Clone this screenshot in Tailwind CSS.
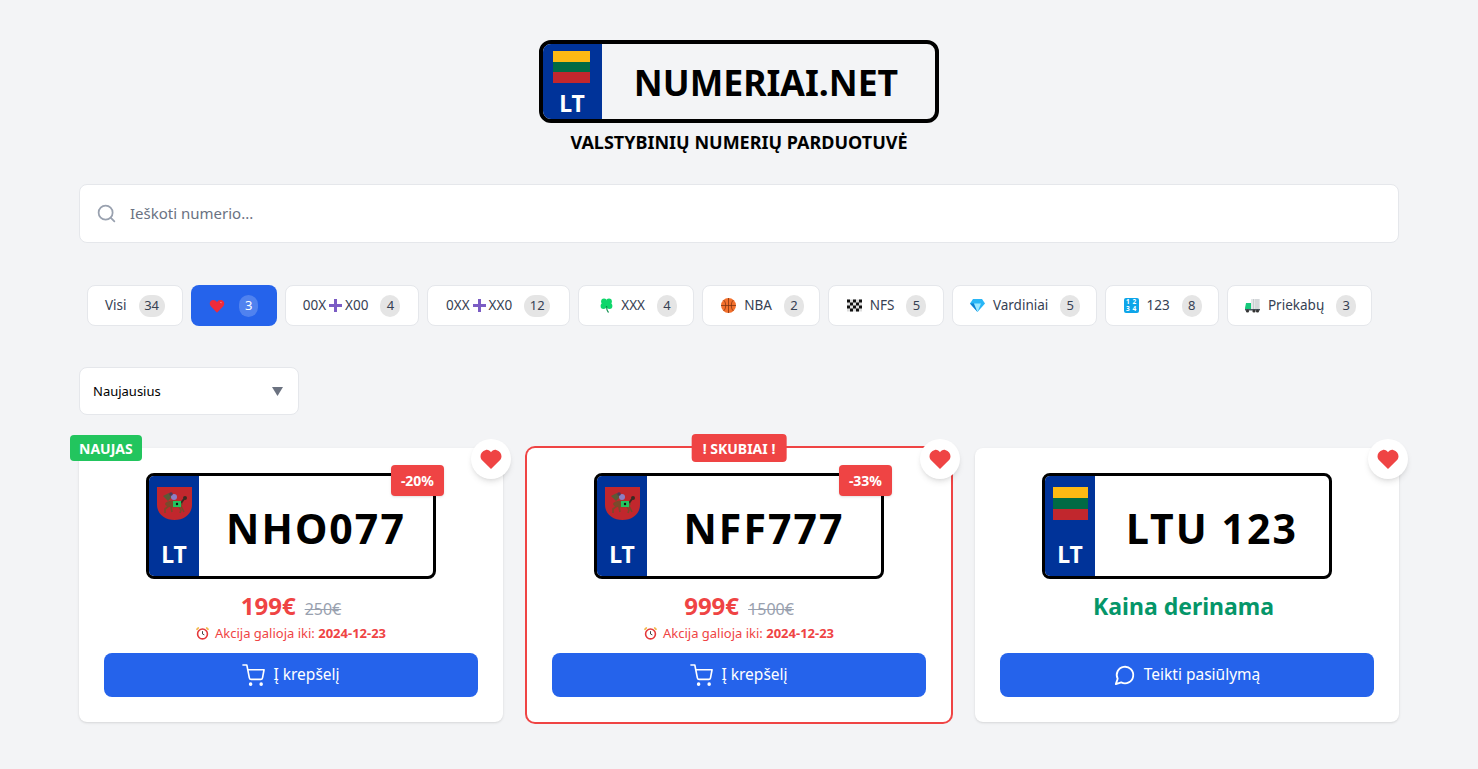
<!DOCTYPE html>
<html lang="lt">
<head>
  <meta charset="UTF-8" />
  <title>Numeriai.net</title>
  <script src="https://cdn.jsdelivr.net/npm/@tailwindcss/browser@4"></script>
</head>
<body class="bg-[#f3f4f6] min-h-screen font-['Noto_Sans',sans-serif] text-black overflow-hidden">
  <div class="w-[1320px] mx-auto pt-10">

    <!-- logo -->
    <div class="flex flex-col items-center">
      <div class="w-[400px] h-[83px] border-4 border-black rounded-xl overflow-hidden flex">
        <div class="w-[59px] bg-[#003399] flex flex-col items-center pt-[7px] shrink-0">
          <div class="w-[37px] h-[32px] -ml-[2px] flex flex-col">
            <div class="h-1/3 bg-[#fdb913]"></div>
            <div class="h-1/3 bg-[#006a44]"></div>
            <div class="h-1/3 bg-[#c1272d]"></div>
          </div>
          <div class="text-white font-bold text-[23px] leading-none mt-[9px] -ml-[1px]">LT</div>
        </div>
        <div class="flex-1 flex items-center justify-center pr-[5px] pt-[2px] text-[35.6px] font-bold leading-none">NUMERIAI.NET</div>
      </div>
      <div class="text-[18px] font-bold leading-none mt-[10px]">VALSTYBINIŲ NUMERIŲ PARDUOTUVĖ</div>
    </div>

    <!-- paieska -->
    <div class="mt-[33px] h-[59px] bg-white border border-gray-200 rounded-lg flex items-center px-4 gap-[13px]">
      <svg class="w-[21px] h-[21px] text-gray-400 shrink-0" viewBox="0 0 24 24" fill="none" stroke="currentColor" stroke-width="2" stroke-linecap="round" stroke-linejoin="round"><circle cx="11" cy="11" r="8"/><path d="m21 21-4.3-4.3"/></svg>
      <input class="flex-1 outline-none text-[15px] placeholder:text-gray-500" placeholder="Ieškoti numerio..." />
    </div>

    <!-- filtrai -->
    <div class="mt-[42px] px-2 flex gap-2 h-[41px] text-[13.5px] text-gray-700">
      <button class="w-[95.6px] bg-white border border-gray-200 rounded-lg flex items-center justify-center gap-3">Visi <span class="w-[26px] h-[22px] rounded-full bg-[#e5e5e5] flex items-center justify-center text-[13px]">34</span></button>
      <button class="w-[86px] bg-[#2563eb] rounded-lg flex items-center justify-center gap-[14px] text-white">
        <svg class="w-[16px] h-[16px]" viewBox="0 0 24 24"><path fill="#ef2b3a" d="M12 22 2.6 12.2C-.6 8.6 1.6 3 6.6 3c2.300 0 4.200 1.200 5.400 3.200C13.200 4.200 15.100 3 17.400 3c5 0 7.200 5.600 4 9.200Z"/><path fill="#ff8a93" d="M17 6c1.500 0 2.500 1 2.700 2.300-.9-.9-1.800-1.200-3-1.100Z"/></svg>
        <span class="w-[19px] h-[22px] rounded-full bg-white/20 flex items-center justify-center text-[13px]">3</span>
      </button>
      <button class="w-[134px] bg-white border border-gray-200 rounded-lg flex items-center justify-center gap-3">
        <span class="flex items-center">00X<svg class="w-[15px] h-[15px] mx-[2px]" viewBox="0 0 15 15"><path fill="#7b5cc4" d="M6 1h3v5h5v3H9v5H6V9H1V6h5Z"/></svg>X00</span>
        <span class="w-[20px] h-[22px] rounded-full bg-[#e5e5e5] flex items-center justify-center text-[13px]">4</span>
      </button>
      <button class="w-[143px] bg-white border border-gray-200 rounded-lg flex items-center justify-center gap-3">
        <span class="flex items-center">0XX<svg class="w-[15px] h-[15px] mx-[2px]" viewBox="0 0 15 15"><path fill="#7b5cc4" d="M6 1h3v5h5v3H9v5H6V9H1V6h5Z"/></svg>XX0</span>
        <span class="w-[26px] h-[22px] rounded-full bg-[#e5e5e5] flex items-center justify-center text-[13px]">12</span>
      </button>
      <button class="w-[116px] bg-white border border-gray-200 rounded-lg flex items-center justify-center gap-3">
        <span class="flex items-center gap-2 pl-[6px]">
          <svg class="w-[13px] h-[15px]" viewBox="0 0 13 15"><g fill="#0fd66b"><circle cx="4" cy="3.500" r="2.900"/><circle cx="9" cy="3.500" r="2.900"/><circle cx="3.500" cy="8" r="2.900"/><circle cx="9.500" cy="8" r="2.900"/><rect x="4" y="3" width="5" height="6"/></g><path d="M6.500 8c0 3 .5 5 2 6.500" stroke="#0c8f4c" stroke-width="1.200" fill="none"/></svg>
          XXX</span>
        <span class="w-[20px] h-[22px] rounded-full bg-[#e5e5e5] flex items-center justify-center text-[13px]">4</span>
      </button>
      <button class="w-[118px] bg-white border border-gray-200 rounded-lg flex items-center justify-center gap-3">
        <span class="flex items-center gap-2 pl-[4px]">
          <svg class="w-[15px] h-[15px]" viewBox="0 0 14 14"><circle cx="7" cy="7" r="7" fill="#f4702c"/><path d="M7 0v14M0 7h14M2.500 2C5 4 5 10 2.500 12M11.500 2C9 4 9 10 11.500 12" stroke="#7a3210" stroke-width=".7" fill="none"/></svg>
          NBA</span>
        <span class="w-[20px] h-[22px] rounded-full bg-[#e5e5e5] flex items-center justify-center text-[13px]">2</span>
      </button>
      <button class="w-[116px] bg-white border border-gray-200 rounded-lg flex items-center justify-center gap-3">
        <span class="flex items-center gap-2 pl-[2px]">
          <svg class="w-[15px] h-[13px]" viewBox="0 0 15 12"><rect width="15" height="12" fill="#ddd"/><path fill="#111" d="M0 0h3v3H0zM6 0h3v3H6zM12 0h3v3h-3zM3 3h3v3H3zM9 3h3v3H9zM0 6h3v3H0zM6 6h3v3H6zM12 6h3v3h-3zM3 9h3v3H3zM9 9h3v3H9z"/></svg>
          NFS</span>
        <span class="w-[20px] h-[22px] rounded-full bg-[#e5e5e5] flex items-center justify-center text-[13px]">5</span>
      </button>
      <button class="w-[145px] bg-white border border-gray-200 rounded-lg flex items-center justify-center gap-3">
        <span class="flex items-center gap-2 pl-[2px]">
          <svg class="w-[15px] h-[13px]" viewBox="0 0 15 13"><path fill="#29b6f6" d="M3 0h9l3 4.500L7.500 13 0 4.500Z"/><path fill="#0d7fd1" d="M0 4.500h4L7.500 13Z"/><path fill="#9be7ff" d="M4 4.500h7L7.500 13Z"/></svg>
          Vardiniai</span>
        <span class="w-[20px] h-[22px] rounded-full bg-[#e5e5e5] flex items-center justify-center text-[13px]">5</span>
      </button>
      <button class="w-[114px] bg-white border border-gray-200 rounded-lg flex items-center justify-center gap-3">
        <span class="flex items-center gap-2 pl-[2px]">
          <span class="w-[15px] h-[15px] bg-[#0ea5e9] rounded-[2px] grid grid-cols-2 px-[1px] py-[1px] text-white text-[6.5px] font-bold leading-[6.5px] text-center"><span>1</span><span>2</span><span>3</span><span>4</span></span>
          123</span>
        <span class="w-[20px] h-[22px] rounded-full bg-[#e5e5e5] flex items-center justify-center text-[13px]">8</span>
      </button>
      <button class="w-[145px] bg-white border border-gray-200 rounded-lg flex items-center justify-center gap-3">
        <span class="flex items-center gap-2 pl-[3px]">
          <svg class="w-[15px] h-[14px]" viewBox="0 0 15 14"><rect x="6" y="0" width="9" height="10" fill="#e4e6e8"/><path d="M8.500 0v10M11 0v10M13 0v10" stroke="#b4babe" stroke-width=".6"/><path fill="#16c97c" d="M0 9l1-5h5v6H0z"/><rect y="10" width="15" height="1.500" fill="#4a5560"/><circle cx="2.500" cy="12" r="1.600" fill="#333"/><circle cx="9" cy="12" r="1.600" fill="#333"/><circle cx="12.500" cy="12" r="1.600" fill="#333"/></svg>
          Priekabų</span>
        <span class="w-[20px] h-[22px] rounded-full bg-[#e5e5e5] flex items-center justify-center text-[13px]">3</span>
      </button>
    </div>

    <!-- rikiavimas -->
    <div class="relative mt-[41px] w-[220px] h-[48px]">
      <select class="appearance-none w-full h-full bg-white border border-gray-200 rounded-lg pl-[13px] pt-[2px] text-[13px] text-black outline-none">
        <option>Naujausius</option>
      </select>
      <svg class="absolute right-[16px] top-[20px] w-[11px] h-[9px]" viewBox="0 0 11 9"><path fill="#6b7280" d="M0 0h11L5.500 9Z"/></svg>
    </div>

    <!-- korteles -->
    <div class="mt-[33px] grid grid-cols-3 gap-6">

      <div class="relative bg-white rounded-lg shadow-sm p-[25px] flex flex-col items-center">
        <span class="absolute left-[-9px] top-[-13px] h-[26px] px-[9px] flex items-center rounded bg-[#22c55e] text-white text-[14px] font-bold">NAUJAS</span>
        <button class="absolute right-[-8px] top-[-9px] w-10 h-10 rounded-full bg-white shadow-md flex items-center justify-center">
          <svg class="w-[22px] h-[20px]" viewBox="0 0 24 22"><path fill="#ef4444" d="M12 22 2 12C-1 8.700.4 2.200 6.300 1c2.600-.4 4.500.8 5.700 2.500C13.200 1.800 15.100.6 17.700 1c5.900 1.200 7.300 7.700 4.300 11Z"/></svg>
        </button>
        <div class="relative w-[290px] h-[106px] border-[3px] border-black rounded-lg flex">
          <div class="w-[50px] bg-[#003399] rounded-l-[5px] flex flex-col items-center pt-[11px] shrink-0">
            <svg class="w-[35px] h-[33px]" viewBox="0 0 35 33"><path fill="#c1272d" d="M0 0h35v18c0 9-8 15-17.500 15S0 27 0 18Z"/><path fill="none" stroke="#7a4a2b" stroke-width="1.600" d="M12 19l-4 3 0 4M14 20l1 5M22 20l2 3-1 3M24 19l3 6"/><ellipse cx="17" cy="17" rx="9" ry="3.500" fill="#7a4a2b"/><path fill="none" stroke="#3a2a22" stroke-width="2" d="M24 16l3-4"/><circle cx="28" cy="11" r="2" fill="#3a2a22"/><path fill="#5c5a36" d="M6 9l6-3 3 4-4 4Z"/><circle cx="17" cy="10" r="3" fill="#8b7fc4"/><circle cx="14" cy="7" r="1.800" fill="#4a3a5a"/><rect x="16" y="14" width="8" height="6" fill="#22c55e"/><circle cx="20" cy="17" r="1.200" fill="#111"/></svg>
            <div class="mt-auto mb-[10px] text-white font-bold text-[23px] leading-none">LT</div>
          </div>
          <div class="flex-1 flex items-center justify-center pt-[5px] text-[41px] font-bold tracking-[0.05em] leading-none">NHO077</div>
          <span class="absolute right-[-11px] top-[-11px] h-[31px] px-[10px] flex items-center rounded bg-[#ef4444] text-white text-[14px] font-bold shadow">-20%</span>
        </div>
        <div class="h-[74px] flex flex-col items-center pt-[10px]">
          <div class="flex items-baseline gap-[9px] leading-[34px]"><span class="text-[24px] font-bold text-[#ef4444]">199€</span><span class="text-[16px] text-gray-400 line-through">250€</span></div>
          <div class="flex items-center gap-[6px] text-[13px] text-[#ef4444] leading-[16px] -mt-[1px]">
            <svg class="w-[13px] h-[13px]" viewBox="0 0 14 14"><circle cx="7" cy="7.500" r="5.300" fill="#fff" stroke="#e5383a" stroke-width="1.700"/><path d="M7 4.500v3l2 1" stroke="#333" stroke-width="1" fill="none"/><path d="M.5 3 3 .5M13.500 3 11 .5" stroke="#f2b84b" stroke-width="1.800"/></svg>
            <span>Akcija galioja iki: <b>2024-12-23</b></span>
          </div>
        </div>
        <button class="w-full h-[44px] bg-[#2563eb] rounded-lg text-white text-[15.5px] flex items-center justify-center gap-2">
          <svg class="w-[23px] h-[23px]" viewBox="0 0 24 24" fill="none" stroke="currentColor" stroke-width="1.700" stroke-linecap="round" stroke-linejoin="round"><circle cx="9" cy="21" r="1"/><circle cx="20" cy="21" r="1"/><path d="M1 1h4l2.680 13.390a2 2 0 0 0 2 1.610h9.720a2 2 0 0 0 2-1.610L23 6H6"/></svg>
          Į krepšelį
        </button>
      </div>

      <div class="relative bg-white rounded-lg ring-2 ring-[#ef4444] p-[25px] flex flex-col items-center">
        <span class="absolute left-1/2 -translate-x-1/2 top-[-14px] h-[28px] px-[11px] flex items-center rounded bg-[#ef4444] text-white text-[14px] font-bold whitespace-nowrap">! SKUBIAI !</span>
        <button class="absolute right-[-9px] top-[-9px] w-10 h-10 rounded-full bg-white shadow-md flex items-center justify-center">
          <svg class="w-[22px] h-[20px]" viewBox="0 0 24 22"><path fill="#ef4444" d="M12 22 2 12C-1 8.700.4 2.200 6.300 1c2.600-.4 4.500.8 5.700 2.500C13.200 1.800 15.100.6 17.700 1c5.900 1.200 7.300 7.700 4.300 11Z"/></svg>
        </button>
        <div class="relative w-[290px] h-[106px] border-[3px] border-black rounded-lg flex">
          <div class="w-[50px] bg-[#003399] rounded-l-[5px] flex flex-col items-center pt-[11px] shrink-0">
            <svg class="w-[35px] h-[33px]" viewBox="0 0 35 33"><path fill="#c1272d" d="M0 0h35v18c0 9-8 15-17.500 15S0 27 0 18Z"/><path fill="none" stroke="#7a4a2b" stroke-width="1.600" d="M12 19l-4 3 0 4M14 20l1 5M22 20l2 3-1 3M24 19l3 6"/><ellipse cx="17" cy="17" rx="9" ry="3.500" fill="#7a4a2b"/><path fill="none" stroke="#3a2a22" stroke-width="2" d="M24 16l3-4"/><circle cx="28" cy="11" r="2" fill="#3a2a22"/><path fill="#5c5a36" d="M6 9l6-3 3 4-4 4Z"/><circle cx="17" cy="10" r="3" fill="#8b7fc4"/><circle cx="14" cy="7" r="1.800" fill="#4a3a5a"/><rect x="16" y="14" width="8" height="6" fill="#22c55e"/><circle cx="20" cy="17" r="1.200" fill="#111"/></svg>
            <div class="mt-auto mb-[10px] text-white font-bold text-[23px] leading-none">LT</div>
          </div>
          <div class="flex-1 flex items-center justify-center pt-[5px] text-[41px] font-bold tracking-[0.05em] leading-none">NFF777</div>
          <span class="absolute right-[-11px] top-[-11px] h-[31px] px-[10px] flex items-center rounded bg-[#ef4444] text-white text-[14px] font-bold shadow">-33%</span>
        </div>
        <div class="h-[74px] flex flex-col items-center pt-[10px]">
          <div class="flex items-baseline gap-[9px] leading-[34px]"><span class="text-[24px] font-bold text-[#ef4444]">999€</span><span class="text-[16px] text-gray-400 line-through">1500€</span></div>
          <div class="flex items-center gap-[6px] text-[13px] text-[#ef4444] leading-[16px] -mt-[1px]">
            <svg class="w-[13px] h-[13px]" viewBox="0 0 14 14"><circle cx="7" cy="7.500" r="5.300" fill="#fff" stroke="#e5383a" stroke-width="1.700"/><path d="M7 4.500v3l2 1" stroke="#333" stroke-width="1" fill="none"/><path d="M.5 3 3 .5M13.500 3 11 .5" stroke="#f2b84b" stroke-width="1.800"/></svg>
            <span>Akcija galioja iki: <b>2024-12-23</b></span>
          </div>
        </div>
        <button class="w-full h-[44px] bg-[#2563eb] rounded-lg text-white text-[15.5px] flex items-center justify-center gap-2">
          <svg class="w-[23px] h-[23px]" viewBox="0 0 24 24" fill="none" stroke="currentColor" stroke-width="1.700" stroke-linecap="round" stroke-linejoin="round"><circle cx="9" cy="21" r="1"/><circle cx="20" cy="21" r="1"/><path d="M1 1h4l2.680 13.390a2 2 0 0 0 2 1.610h9.720a2 2 0 0 0 2-1.610L23 6H6"/></svg>
          Į krepšelį
        </button>
      </div>

      <div class="relative bg-white rounded-lg shadow-sm p-[25px] flex flex-col items-center">
        <button class="absolute right-[-9px] top-[-9px] w-10 h-10 rounded-full bg-white shadow-md flex items-center justify-center">
          <svg class="w-[22px] h-[20px]" viewBox="0 0 24 22"><path fill="#ef4444" d="M12 22 2 12C-1 8.700.4 2.200 6.300 1c2.600-.4 4.500.8 5.700 2.500C13.200 1.800 15.100.6 17.700 1c5.900 1.200 7.300 7.700 4.300 11Z"/></svg>
        </button>
        <div class="relative w-[290px] h-[106px] border-[3px] border-black rounded-lg flex">
          <div class="w-[50px] bg-[#003399] rounded-l-[5px] flex flex-col items-center pt-[11px] shrink-0">
            <div class="w-[35px] h-[33px] flex flex-col">
              <div class="h-1/3 bg-[#fdb913]"></div>
              <div class="h-1/3 bg-[#006a44]"></div>
              <div class="h-1/3 bg-[#c1272d]"></div>
            </div>
            <div class="mt-auto mb-[10px] text-white font-bold text-[23px] leading-none">LT</div>
          </div>
          <div class="flex-1 flex items-center justify-center pt-[5px] text-[41px] font-bold tracking-[0.05em] leading-none whitespace-pre">LTU 123</div>
        </div>
        <div class="h-[74px] flex flex-col items-center pt-[10px]">
          <div class="text-[23px] font-bold text-[#059669] leading-[34px] pr-[7px]">Kaina derinama</div>
        </div>
        <button class="w-full h-[44px] bg-[#2563eb] rounded-lg text-white text-[15.5px] flex items-center justify-center gap-2">
          <svg class="w-[22px] h-[22px]" viewBox="0 0 24 24" fill="none" stroke="currentColor" stroke-width="2" stroke-linecap="round" stroke-linejoin="round"><path d="M7.900 20A9 9 0 1 0 4 16.100L2 22Z"/></svg>
          Teikti pasiūlymą
        </button>
      </div>

    </div>
  </div>
</body>
</html>
